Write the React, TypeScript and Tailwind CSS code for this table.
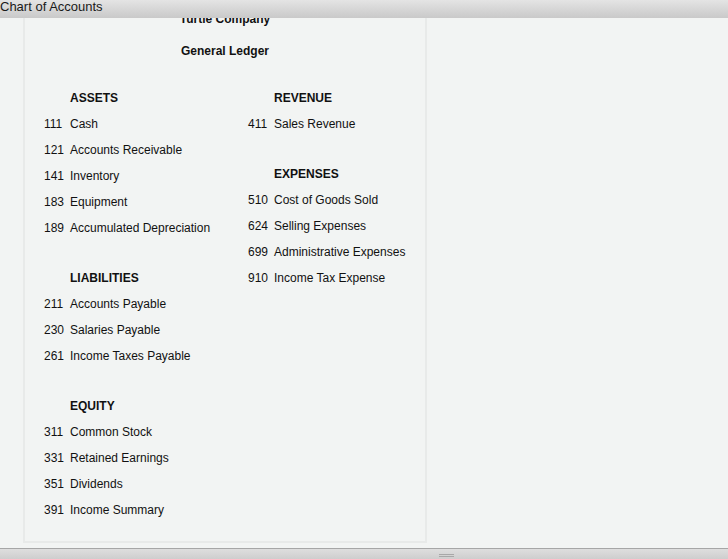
import React from "react";

type Row = { kind: "head"; text: string } | { kind: "item"; num: string; name: string } | { kind: "gap" };

const left: Row[] = [
  { kind: "head", text: "ASSETS" },
  { kind: "item", num: "111", name: "Cash" },
  { kind: "item", num: "121", name: "Accounts Receivable" },
  { kind: "item", num: "141", name: "Inventory" },
  { kind: "item", num: "183", name: "Equipment" },
  { kind: "item", num: "189", name: "Accumulated Depreciation" },
  { kind: "gap" },
  { kind: "head", text: "LIABILITIES" },
  { kind: "item", num: "211", name: "Accounts Payable" },
  { kind: "item", num: "230", name: "Salaries Payable" },
  { kind: "item", num: "261", name: "Income Taxes Payable" },
  { kind: "gap" },
  { kind: "head", text: "EQUITY" },
  { kind: "item", num: "311", name: "Common Stock" },
  { kind: "item", num: "331", name: "Retained Earnings" },
  { kind: "item", num: "351", name: "Dividends" },
  { kind: "item", num: "391", name: "Income Summary" },
];

const right: Row[] = [
  { kind: "head", text: "REVENUE" },
  { kind: "item", num: "411", name: "Sales Revenue" },
  { kind: "gap" },
  { kind: "head", text: "EXPENSES" },
  { kind: "item", num: "510", name: "Cost of Goods Sold" },
  { kind: "item", num: "624", name: "Selling Expenses" },
  { kind: "item", num: "699", name: "Administrative Expenses" },
  { kind: "item", num: "910", name: "Income Tax Expense" },
];

function Column({ rows }: { rows: Row[] }) {
  return (
    <div className="flex flex-col">
      {rows.map((r, i) => {
        if (r.kind === "gap") return <div key={i} className="h-[24px]" />;
        if (r.kind === "head")
          return (
            <div key={i} className="h-[26px] flex items-center pl-[26px] font-bold whitespace-nowrap">
              {r.text}
            </div>
          );
        return (
          <div key={i} className="h-[26px] flex items-center whitespace-nowrap">
            <span className="w-[26px]">{r.num}</span>
            <span>{r.name}</span>
          </div>
        );
      })}
    </div>
  );
}

export default function App() {
  return (
    <div
      className="w-[728px] h-[559px] flex flex-col overflow-hidden bg-[#f2f4f3] text-[#111] text-[12px]"
      style={{ fontFamily: '"Liberation Sans", Arial, sans-serif' }}
    >
      <div className="h-[18px] shrink-0 bg-gradient-to-b from-[#e4e4e4] to-[#c9c9c9] text-[13px] leading-[13px] text-[#1a1a1a] z-10 relative">
        Chart of Accounts
      </div>
      <div className="h-[530px] shrink-0 overflow-hidden">
        <div className="-mt-[14px] ml-[23px] w-[404px] border-2 border-[#e8eae9] pb-[18px]">
          <div className="h-[26px] flex items-center justify-center font-bold">Turtle Company</div>
          <div className="mt-[6px] h-[26px] flex items-center justify-center font-bold">General Ledger</div>
          <div className="mt-[21px] pl-[19px] flex">
            <div className="w-[204px]">
              <Column rows={left} />
            </div>
            <div>
              <Column rows={right} />
            </div>
          </div>
        </div>
      </div>
      <div className="h-[11px] shrink-0 border-t border-[#a6a6a6] bg-gradient-to-b from-[#dedede] to-[#cecece] relative">
        <div className="absolute left-[439px] top-[5px] w-[15px] h-[1px] bg-[#a8a8a8]" />
        <div className="absolute left-[439px] top-[7px] w-[15px] h-[1px] bg-[#a8a8a8]" />
      </div>
    </div>
  );
}
